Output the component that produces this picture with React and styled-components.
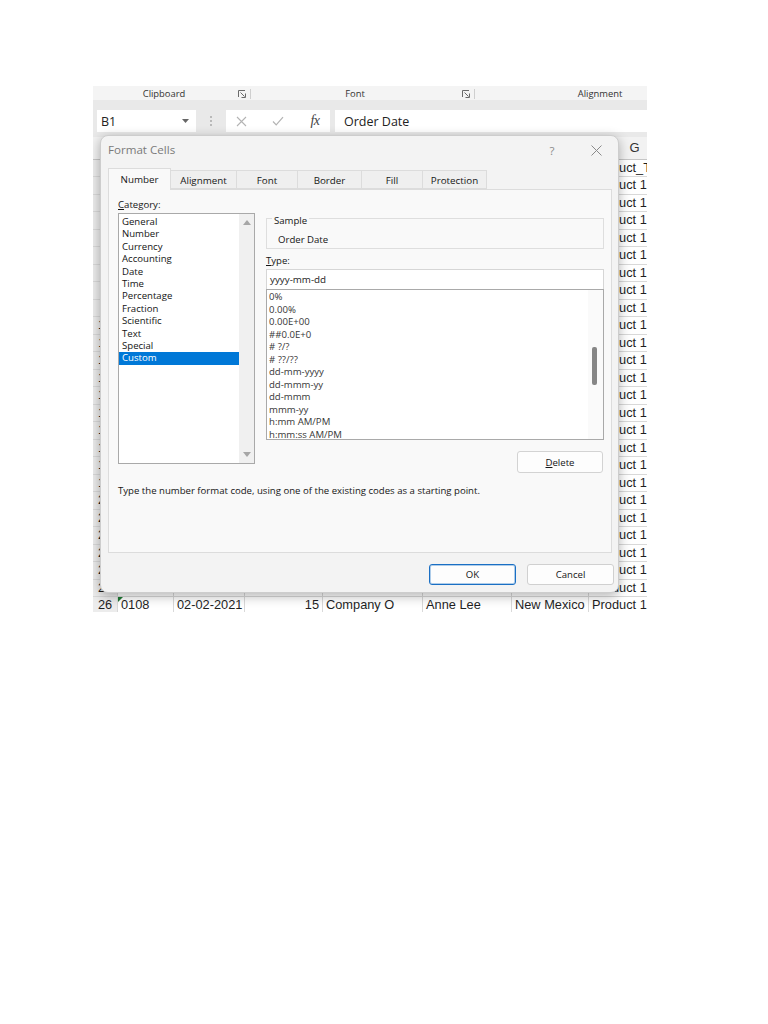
import React from 'react';
import styled, { createGlobalStyle } from 'styled-components';

const GlobalStyle = createGlobalStyle`
  html, body { margin: 0; padding: 0; background: #ffffff; }
  body { font-family: "Open Sans", "Noto Sans", sans-serif; }
`;

const UI = '"Open Sans", "Noto Sans", sans-serif';
const CELLFONT = '"Liberation Sans", Arial, sans-serif';
const COLS = '25px 56px 71px 78px 100px 89px 77px 92px';

const Page = styled.div`
  padding: 86px 0 0 93px;
  width: 768px;
  height: 1024px;
  box-sizing: border-box;
`;

const Shot = styled.div`
  position: relative;
  width: 554px;
  height: 526px;
  overflow: hidden;
  display: flex;
  flex-direction: column;
  background: #fff;
`;

/* ---------- ribbon group labels ---------- */
const RibbonLabels = styled.div`
  height: 14px;
  flex: none;
  background: #f4f4f4;
  display: flex;
  font-family: ${UI};
  font-size: 9.4px;
  color: #333;
`;

const Group = styled.div`
  width: ${p => p.$w}px;
  flex: none;
  display: flex;
  align-items: center;
  border-right: ${p => (p.$last ? 'none' : '1px solid #cfcfcf')};
  box-sizing: border-box;
  margin: 3px 0 1px;
`;

const GroupLabel = styled.span`
  flex: 1;
  text-align: center;
  line-height: 10px;
`;

const Launcher = styled.svg`
  width: 8px;
  height: 8px;
  margin: 0 4px 0 3px;
  flex: none;
`;

/* ---------- formula bar ---------- */
const FormulaBar = styled.div`
  flex: none;
  background: #e9e9e9;
  padding: 10px 0 5px 4px;
  display: flex;
  align-items: center;
`;

const NameBox = styled.div`
  width: 99px;
  height: 22px;
  flex: none;
  background: #fff;
  box-sizing: border-box;
  display: flex;
  align-items: center;
  justify-content: space-between;
  padding: 0 7px 0 4px;
  font-family: ${UI};
  font-size: 12.5px;
  color: #222;
`;

const Caret = styled.svg`
  width: 7px;
  height: 4px;
`;

const Dots = styled.div`
  width: 30px;
  flex: none;
  display: flex;
  flex-direction: column;
  align-items: center;
  gap: 2px;
`;

const Dot = styled.span`
  width: 2px;
  height: 2px;
  border-radius: 1px;
  background: #a8a8a8;
`;

const FxBox = styled.div`
  width: 104px;
  height: 22px;
  flex: none;
  background: #fff;
  display: grid;
  grid-template-columns: 30px 44px 30px;
  align-items: center;
  justify-items: center;
`;

const FxText = styled.span`
  font-family: "Liberation Serif", "DejaVu Serif", serif;
  font-style: italic;
  font-size: 14px;
  color: #444;
  letter-spacing: -0.5px;
`;

const FormulaInput = styled.div`
  flex: 1;
  height: 22px;
  margin-left: 5px;
  background: #fff;
  display: flex;
  align-items: center;
  padding-left: 9px;
  font-family: ${UI};
  font-size: 12.5px;
  color: #222;
`;

/* ---------- sheet ---------- */
const Sheet = styled.div`
  flex: 1;
  overflow: hidden;
  background: #fff;
`;

const SheetRow = styled.div`
  display: grid;
  grid-template-columns: ${COLS};
  height: ${p => p.$h}px;
`;

const Cell = styled.div`
  position: relative;
  box-sizing: border-box;
  border-right: 1px solid #d9d9d9;
  border-bottom: 1px solid ${p => (p.$head ? '#c6c6c6' : '#d9d9d9')};
  padding: 0 3px;
  font-family: ${CELLFONT};
  font-size: ${p => (p.$head ? 13 : 12.8)}px;
  line-height: ${p => p.$h - 1}px;
  white-space: nowrap;
  overflow: hidden;
  color: ${p => (p.$head ? '#333' : '#1f1f1f')};
  text-align: ${p => p.$align || 'left'};
  background: ${p => (p.$head ? '#f2f2f2' : p.$rowhead ? '#ececec' : '#fff')};
`;

const ErrTriangle = styled.span`
  position: absolute;
  left: 0;
  top: 0;
  width: 0;
  height: 0;
  border-top: 5px solid #1e7a34;
  border-right: 5px solid transparent;
`;

/* ---------- dialog ---------- */
const Dialog = styled.div`
  position: absolute;
  left: 7px;
  top: 49px;
  width: 519px;
  height: 458px;
  box-sizing: border-box;
  background: #f3f3f3;
  border: 1px solid #cdcdcd;
  border-radius: 8px;
  box-shadow: 0 3px 12px rgba(0, 0, 0, 0.3);
  display: flex;
  flex-direction: column;
  padding: 0 4px 7px 7px;
  font-family: ${UI};
  font-size: 9.6px;
  color: #161616;
`;

const TitleBar = styled.div`
  height: 32px;
  flex: none;
  display: flex;
  align-items: flex-start;
  margin-right: -4px;
`;

const Title = styled.div`
  flex: 1;
  padding-top: 6px;
  line-height: 16px;
  font-size: 11.6px;
  color: #7a7a7a;
`;

const TitleButton = styled.div`
  width: 44px;
  height: 26px;
  display: flex;
  align-items: center;
  justify-content: center;
  padding-top: 1px;
  color: #8a8a8a;
  font-size: 11.5px;
`;

const Tabs = styled.div`
  height: 21px;
  flex: none;
  display: flex;
  align-items: flex-end;
  position: relative;
  z-index: 1;
`;

const Tab = styled.div`
  width: ${p => p.$w}px;
  height: ${p => (p.$active ? 22 : 19)}px;
  margin-bottom: ${p => (p.$active ? -1 : 0)}px;
  box-sizing: border-box;
  border: 1px solid #dcdcdc;
  border-left: ${p => (p.$first ? '1px solid #dcdcdc' : 'none')};
  border-bottom: ${p => (p.$active ? 'none' : '1px solid #dcdcdc')};
  background: ${p => (p.$active ? '#f9f9f9' : '#efefef')};
  display: flex;
  align-items: center;
  justify-content: center;
  padding-top: ${p => (p.$active ? 0 : 2)}px;
  font-size: 9.8px;
  color: #161616;
`;

const Panel = styled.div`
  width: 504px;
  height: 364px;
  flex: none;
  box-sizing: border-box;
  border: 1px solid #dcdcdc;
  background: #f9f9f9;
  padding: 8px 7px 0 9px;
`;

const PanelGrid = styled.div`
  display: grid;
  grid-template-columns: 137px 338px;
  column-gap: 11px;
  align-items: start;
`;

const Column = styled.div`
  display: flex;
  flex-direction: column;
`;

const FieldLabel = styled.div`
  line-height: 13px;
  height: 13px;
  margin-bottom: 2px;
`;

const CategoryList = styled.div`
  height: 251px;
  box-sizing: border-box;
  border: 1px solid #a9a9a9;
  background: #fff;
  display: flex;
`;

const ListItems = styled.div`
  flex: 1;
  padding-top: ${p => p.$pt}px;
  overflow: hidden;
`;

const ListItem = styled.div`
  line-height: ${p => p.$lh}px;
  height: ${p => p.$lh}px;
  padding-left: ${p => p.$pl}px;
  white-space: nowrap;
  background: ${p => (p.$selected ? '#0078d7' : 'transparent')};
  color: ${p => (p.$selected ? '#fff' : p.$muted ? '#363636' : '#141414')};
`;

const VScroll = styled.div`
  width: ${p => p.$w}px;
  flex: none;
  background: ${p => p.$bg};
  display: flex;
  flex-direction: column;
  align-items: center;
  justify-content: ${p => p.$justify || 'flex-start'};
  padding: ${p => p.$pad};
  box-sizing: border-box;
`;

const Arrow = styled.svg`
  width: 8px;
  height: 5px;
`;

const Thumb = styled.div`
  width: 5px;
  height: 38px;
  border-radius: 2px;
  background: #868686;
  margin-right: 2px;
`;

const SampleBox = styled.fieldset`
  margin: 11px 0 0 0;
  padding: 7px 0 2px 11px;
  border: 1px solid #dedede;
  min-width: 0;
  line-height: 12px;
`;

const SampleLegend = styled.legend`
  padding: 6px 2px 0;
  margin-left: -6px;
  line-height: 12px;
`;

const TypeLabel = styled.div`
  line-height: 12px;
  margin: 6px 0 2px;
`;

const TypeInput = styled.div`
  height: 20px;
  box-sizing: border-box;
  border: 1px solid #d6d6d6;
  border-bottom: none;
  background: #fff;
  display: flex;
  align-items: center;
  padding-left: 3px;
  font-size: 9.8px;
  color: #222;
`;

const FormatList = styled.div`
  height: 151px;
  box-sizing: border-box;
  border: 1px solid #a9a9a9;
  background: #fff;
  display: flex;
`;

const SmallButton = styled.div`
  align-self: flex-end;
  margin: 11px 1px 0 0;
  width: 86px;
  height: 22px;
  box-sizing: border-box;
  border: 1px solid #d3d3d3;
  border-radius: 3px;
  background: #fdfdfd;
  display: flex;
  align-items: center;
  justify-content: center;
`;

const Description = styled.div`
  margin-top: 12px;
  line-height: 12px;
`;

const ButtonRow = styled.div`
  margin-top: 11px;
  display: flex;
  justify-content: flex-end;
  gap: 11px;
`;

const DialogButton = styled.div`
  width: 87px;
  height: 21px;
  box-sizing: border-box;
  border: 1px solid ${p => (p.$primary ? '#1a6fc4' : '#d0d0d0')};
  box-shadow: ${p => (p.$primary ? 'inset 0 0 0 1px rgba(26,111,196,0.35)' : 'none')};
  border-radius: 3px;
  background: #fdfdfd;
  display: flex;
  align-items: center;
  justify-content: center;
  font-size: 9.6px;
`;

const categories = ['General', 'Number', 'Currency', 'Accounting', 'Date', 'Time', 'Percentage', 'Fraction', 'Scientific', 'Text', 'Special', 'Custom'];
const formats = ['0%', '0.00%', '0.00E+00', '##0.0E+0', '# ?/?', '# ??/??', 'dd-mm-yyyy', 'dd-mmm-yy', 'dd-mmm', 'mmm-yy', 'h:mm AM/PM', 'h:mm:ss AM/PM'];
const tabs = [
  ['Number', 63], ['Alignment', 66], ['Font', 61], ['Border', 64], ['Fill', 61], ['Protection', 64],
];

/* only column G's letter shows beside the dialog */
const headerRow = ['', '', '', '', '', '', '', 'G'];
const lastRow = ['26', '0108', '02-02-2021', '15', 'Company O', 'Anne Lee', 'New Mexico', 'Product 1'];

function LauncherIcon() {
  return (
    <Launcher viewBox="0 0 8 8" fill="none" stroke="#6a6a6a" strokeWidth="1">
      <path d="M0.5 7V0.5H7" />
      <path d="M2.5 2.5L6.5 6.5M7.5 3.5V7.5H3.5" />
    </Launcher>
  );
}

export default function App() {
  const rows = [['1', '', '', '', '', '', '', 'Product_Type']];
  for (let i = 2; i <= 25; i++) {
    rows.push([String(i), '', '', '', '', '', '', 'Product 1']);
  }
  rows.push(lastRow);

  return (
    <Page>
      <GlobalStyle />
      <Shot>
        <RibbonLabels>
          <Group $w={158}>
            <GroupLabel>Clipboard</GroupLabel>
            <LauncherIcon />
          </Group>
          <Group $w={224}>
            <GroupLabel>Font</GroupLabel>
            <LauncherIcon />
          </Group>
          <Group $w={250} $last>
            <GroupLabel>Alignment</GroupLabel>
          </Group>
        </RibbonLabels>

        <FormulaBar>
          <NameBox>
            <span>B1</span>
            <Caret viewBox="0 0 7 4"><polygon points="0,0 7,0 3.5,4" fill="#666" /></Caret>
          </NameBox>
          <Dots><Dot /><Dot /><Dot /></Dots>
          <FxBox>
            <svg width="11" height="11" viewBox="0 0 11 11" stroke="#b3b3b3" strokeWidth="1.1" fill="none">
              <path d="M1 1L10 10M10 1L1 10" />
            </svg>
            <svg width="12" height="10" viewBox="0 0 12 10" stroke="#b3b3b3" strokeWidth="1.2" fill="none">
              <path d="M1 5.5L4.2 8.8L11 1.2" />
            </svg>
            <FxText>fx</FxText>
          </FxBox>
          <FormulaInput>Order Date</FormulaInput>
        </FormulaBar>

        <Sheet>
          <SheetRow $h={22.5}>
            {headerRow.map((t, i) => (
              <Cell key={i} $h={22.5} $head $align="center">{t}</Cell>
            ))}
          </SheetRow>
          {rows.map((r, ri) => (
            <SheetRow key={ri} $h={17.5}>
              {r.map((t, ci) => (
                <Cell
                  key={ci}
                  $h={17.5}
                  $rowhead={ci === 0}
                  $align={ci === 0 ? 'center' : ci === 3 ? 'right' : 'left'}
                >
                  {ci === 1 && r === lastRow ? <ErrTriangle /> : null}
                  {t}
                </Cell>
              ))}
            </SheetRow>
          ))}
        </Sheet>

        <Dialog>
          <TitleBar>
            <Title>Format Cells</Title>
            <TitleButton>?</TitleButton>
            <TitleButton>
              <svg width="11" height="11" viewBox="0 0 11 11" stroke="#8a8a8a" strokeWidth="1" fill="none">
                <path d="M0.5 0.5L10.5 10.5M10.5 0.5L0.5 10.5" />
              </svg>
            </TitleButton>
          </TitleBar>

          <Tabs>
            {tabs.map(([name, w], i) => (
              <Tab key={name} $w={w} $active={i === 0} $first={i === 0}>{name}</Tab>
            ))}
          </Tabs>

          <Panel>
            <PanelGrid>
              <Column>
                <FieldLabel><u>C</u>ategory:</FieldLabel>
                <CategoryList>
                  <ListItems $pt={2}>
                    {categories.map(c => (
                      <ListItem key={c} $lh={12.4} $pl={3} $selected={c === 'Custom'}>{c}</ListItem>
                    ))}
                  </ListItems>
                  <VScroll $w={15} $bg="#f0f0f0" $justify="space-between" $pad="6px 0 6px 0">
                    <Arrow viewBox="0 0 8 5"><polygon points="0,5 8,5 4,0" fill="#a6a6a6" /></Arrow>
                    <Arrow viewBox="0 0 8 5"><polygon points="0,0 8,0 4,5" fill="#a6a6a6" /></Arrow>
                  </VScroll>
                </CategoryList>
              </Column>

              <Column>
                <SampleBox>
                  <SampleLegend>Sample</SampleLegend>
                  Order Date
                </SampleBox>
                <TypeLabel><u>T</u>ype:</TypeLabel>
                <TypeInput>yyyy-mm-dd</TypeInput>
                <FormatList>
                  <ListItems $pt={1}>
                    {formats.map(f => (
                      <ListItem key={f} $lh={12.5} $pl={2} $muted>{f}</ListItem>
                    ))}
                  </ListItems>
                  <VScroll $w={15} $bg="#fafafa" $pad="57px 0 0 0">
                    <Thumb />
                  </VScroll>
                </FormatList>
                <SmallButton><span><u>D</u>elete</span></SmallButton>
              </Column>
            </PanelGrid>
            <Description>
              Type the number format code, using one of the existing codes as a starting point.
            </Description>
          </Panel>

          <ButtonRow>
            <DialogButton $primary>OK</DialogButton>
            <DialogButton>Cancel</DialogButton>
          </ButtonRow>
        </Dialog>
      </Shot>
    </Page>
  );
}
